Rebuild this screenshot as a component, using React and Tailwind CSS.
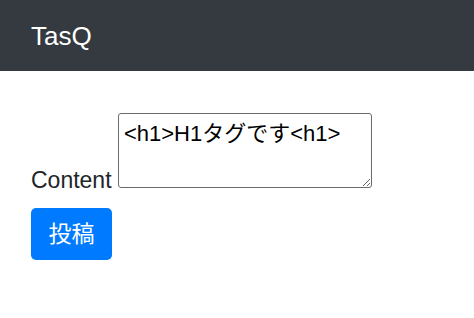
export default function App() {
  return (
    <div className="min-h-[318px] bg-white" style={{ fontFamily: '"Liberation Sans", "Noto Sans CJK JP", sans-serif' }}>
      <nav className="h-[71px] bg-[#343a40] flex items-center px-[31px]">
        <span className="text-white text-[26px] leading-none">TasQ</span>
      </nav>
      <div className="px-[31px] pt-[42px]">
        <form>
          <div className="text-[23px] text-[#212529] leading-none">
            <label htmlFor="content">Content </label>
            <textarea
              id="content"
              defaultValue="<h1>H1タグです<h1>"
              className="w-[254px] h-[75px] border border-[#6b6b6b] rounded-[3px] px-[5px] pt-[7px] pb-[2px] text-[22px] leading-[26px] text-black align-baseline"
            />
          </div>
          <button
            type="button"
            className="mt-[16px] w-[81px] h-[52px] bg-[#007bff] text-white text-[23px] rounded-[5px]"
          >
            投稿
          </button>
        </form>
      </div>
    </div>
  );
}
